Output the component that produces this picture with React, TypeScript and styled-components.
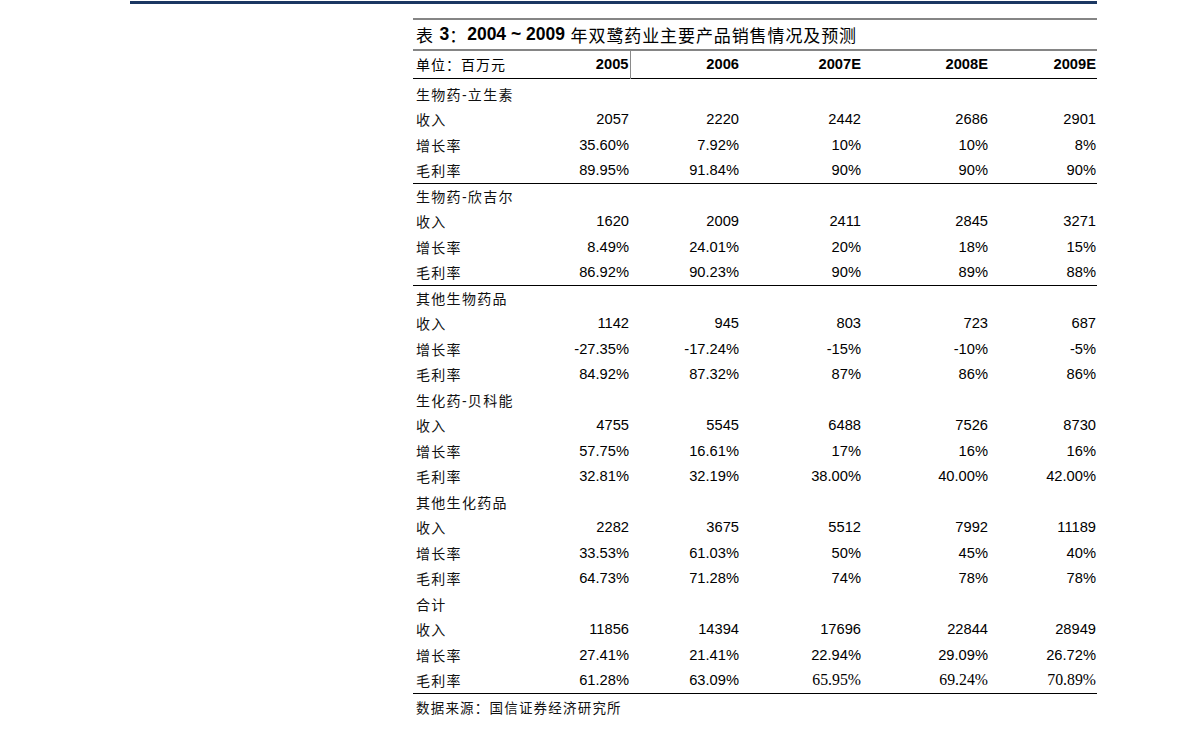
import React from 'react';
import styled, { createGlobalStyle } from 'styled-components';

const GlobalStyle = createGlobalStyle`
  html, body {
    margin: 0;
    padding: 0;
    background: #ffffff;
  }
  body {
    font-family: "Liberation Sans", "Noto Sans CJK SC", sans-serif;
    color: #000;
  }
`;

type Group = {
  name: string;
  line?: boolean;
  rows: string[][];
};

const labels = ['收入', '增长率', '毛利率'];
const years = ['2005', '2006', '2007E', '2008E', '2009E'];

const groups: Group[] = [
  {
    name: '生物药-立生素',
    line: true,
    rows: [
      ['2057', '2220', '2442', '2686', '2901'],
      ['35.60%', '7.92%', '10%', '10%', '8%'],
      ['89.95%', '91.84%', '90%', '90%', '90%'],
    ],
  },
  {
    name: '生物药-欣吉尔',
    line: true,
    rows: [
      ['1620', '2009', '2411', '2845', '3271'],
      ['8.49%', '24.01%', '20%', '18%', '15%'],
      ['86.92%', '90.23%', '90%', '89%', '88%'],
    ],
  },
  {
    name: '其他生物药品',
    rows: [
      ['1142', '945', '803', '723', '687'],
      ['-27.35%', '-17.24%', '-15%', '-10%', '-5%'],
      ['84.92%', '87.32%', '87%', '86%', '86%'],
    ],
  },
  {
    name: '生化药-贝科能',
    rows: [
      ['4755', '5545', '6488', '7526', '8730'],
      ['57.75%', '16.61%', '17%', '16%', '16%'],
      ['32.81%', '32.19%', '38.00%', '40.00%', '42.00%'],
    ],
  },
  {
    name: '其他生化药品',
    rows: [
      ['2282', '3675', '5512', '7992', '11189'],
      ['33.53%', '61.03%', '50%', '45%', '40%'],
      ['64.73%', '71.28%', '74%', '78%', '78%'],
    ],
  },
  {
    name: '合计',
    rows: [
      ['11856', '14394', '17696', '22844', '28949'],
      ['27.41%', '21.41%', '22.94%', '29.09%', '26.72%'],
      ['61.28%', '63.09%', '65.95%', '69.24%', '70.89%'],
    ],
  },
];

const colWidths = [110, 107, 110, 122, 127, 108];

const Page = styled.div`
  width: 1190px;
  padding: 1px 0 0 130px;
  box-sizing: border-box;
`;

const TopBar = styled.div`
  width: 967px;
  height: 3px;
  background: #1b3762;
`;

const Report = styled.div`
  margin: 14px 0 0 283px;
  width: 684px;
`;

const Title = styled.div`
  border-top: 2px solid #858585;
  border-bottom: 2px solid #858585;
  height: 29px;
  display: flex;
  align-items: center;
  padding-left: 3px;
  font-size: 17px;
  letter-spacing: 0.9px;
  white-space: nowrap;
`;

const Bold = styled.b`
  font-family: "Liberation Sans", sans-serif;
  font-weight: 700;
  font-size: 17.5px;
  letter-spacing: 0;
`;

const Table = styled.table`
  width: 684px;
  border-collapse: collapse;
  table-layout: fixed;
`;

const HeadRow = styled.tr`
  height: 27px;
  border-bottom: 1px solid #000;
`;

const HeadLabel = styled.th`
  text-align: left;
  font-weight: 400;
  font-size: 14px;
  letter-spacing: 1px;
  padding: 0 0 0 3px;
`;

const HeadYear = styled.th<{ $divider?: boolean }>`
  text-align: right;
  font-weight: 700;
  font-size: 14.7px;
  padding: 0 1px 0 0;
  border-right: ${(p) => (p.$divider ? '1px solid #8a8a8a' : 'none')};
`;

const Spacer = styled.tr`
  height: 3px;
`;

const Row = styled.tr<{ $line?: boolean }>`
  height: 25.5px;
  border-bottom: ${(p) => (p.$line ? '1px solid #000' : 'none')};
`;

const Label = styled.td`
  padding: 0 0 0 3px;
  font-size: 14px;
  letter-spacing: 1.3px;
  white-space: nowrap;
  color: #111;
`;

const Num = styled.td<{ $serif?: boolean }>`
  text-align: right;
  padding: 0 1px 0 0;
  font-family: ${(p) =>
    p.$serif ? '"Liberation Serif", serif' : '"Liberation Sans", sans-serif'};
  font-size: ${(p) => (p.$serif ? '15.8px' : '14.7px')};
  white-space: nowrap;
`;

const Source = styled.div`
  margin-top: 3px;
  padding-left: 3px;
  font-size: 13.5px;
  letter-spacing: 1.2px;
  color: #111;
`;

export default function App() {
  return (
    <Page>
      <GlobalStyle />
      <TopBar />
      <Report>
        <Title>
          表&nbsp;<Bold>3</Bold>：<Bold>2004 ~ 2009</Bold>&nbsp;年双鹭药业主要产品销售情况及预测
        </Title>
        <Table>
          <colgroup>
            {colWidths.map((w, i) => (
              <col key={i} style={{ width: w }} />
            ))}
          </colgroup>
          <thead>
            <HeadRow>
              <HeadLabel>单位：百万元</HeadLabel>
              {years.map((y, i) => (
                <HeadYear key={y} $divider={i === 0}>
                  {y}
                </HeadYear>
              ))}
            </HeadRow>
          </thead>
          <tbody>
            <Spacer />
            {groups.map((g, gi) => {
              const last = gi === groups.length - 1;
              return (
                <React.Fragment key={g.name}>
                  <Row>
                    <Label colSpan={6}>{g.name}</Label>
                  </Row>
                  {g.rows.map((cells, ri) => (
                    <Row key={ri} $line={(ri === 2 && g.line) || (ri === 2 && last)}>
                      <Label>{labels[ri]}</Label>
                      {cells.map((c, ci) => (
                        <Num key={ci} $serif={last && ri === 2 && ci >= 2}>
                          {c}
                        </Num>
                      ))}
                    </Row>
                  ))}
                </React.Fragment>
              );
            })}
          </tbody>
        </Table>
        <Source>数据来源：国信证券经济研究所</Source>
      </Report>
    </Page>
  );
}
